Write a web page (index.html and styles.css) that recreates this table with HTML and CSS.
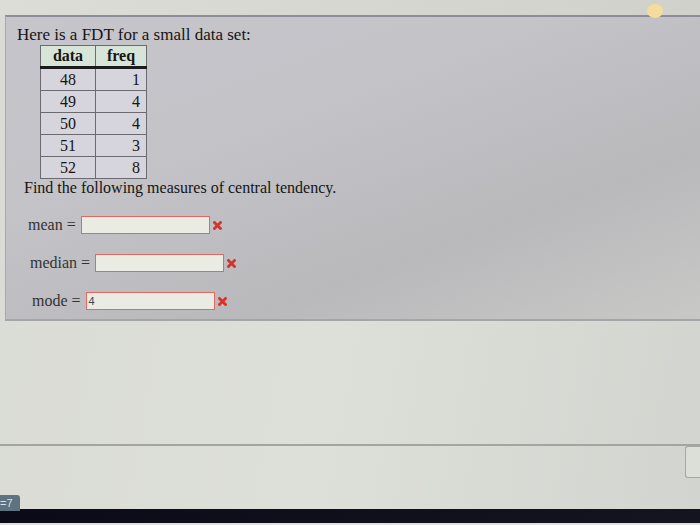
FILE: index.html
```html
<!DOCTYPE html>
<html>
<head>
<meta charset="utf-8">
<link rel="stylesheet" href="styles.css">
</head>
<body>
<div class="page">
  <div class="topbar"></div>
  <div class="glare"></div>
  <div class="panel">
    <p class="intro">Here is a FDT for a small data set:</p>
    <table class="fdt">
      <thead>
        <tr><th>data</th><th>freq</th></tr>
      </thead>
      <tbody>
        <tr><td>48</td><td>1</td></tr>
        <tr><td>49</td><td>4</td></tr>
        <tr><td>50</td><td>4</td></tr>
        <tr><td>51</td><td>3</td></tr>
        <tr><td>52</td><td>8</td></tr>
      </tbody>
    </table>
    <p class="find">Find the following measures of central tendency.</p>
    <div class="answers">
      <div class="row r1">
        <span class="lbl">mean =</span>
        <span class="box"></span>
        <svg class="mark" width="9" height="9" viewBox="0 0 9 9"><path d="M1.5 1.5L7.5 7.5M7.5 1.5L1.5 7.5" stroke="#d8322c" stroke-width="2.8" stroke-linecap="square"/></svg>
      </div>
      <div class="row r2">
        <span class="lbl">median =</span>
        <span class="box"></span>
        <svg class="mark" width="9" height="9" viewBox="0 0 9 9"><path d="M1.5 1.5L7.5 7.5M7.5 1.5L1.5 7.5" stroke="#d8322c" stroke-width="2.8" stroke-linecap="square"/></svg>
      </div>
      <div class="row r3">
        <span class="lbl">mode =</span>
        <span class="box">4</span>
        <svg class="mark" width="9" height="9" viewBox="0 0 9 9"><path d="M1.5 1.5L7.5 7.5M7.5 1.5L1.5 7.5" stroke="#d8322c" stroke-width="2.8" stroke-linecap="square"/></svg>
      </div>
    </div>
  </div>
  <div class="gap"></div>
  <div class="lower">
    <div class="tab">=7</div>
    <div class="sidebox"></div>
  </div>
  <div class="bezel"></div>
</div>
</body>
</html>
```
FILE: styles.css
```css
html, body {
  margin: 0;
  padding: 0;
  width: 700px;
  height: 525px;
  overflow: hidden;
}
body {
  background: #d8dad4;
  font-family: "Liberation Serif", "Times New Roman", serif;
  color: #151515;
}
.page {
  position: relative;
  width: 700px;
  height: 525px;
  display: flex;
  flex-direction: column;
  background: linear-gradient(100deg, #d9dbd4 0%, #dde0d8 50%, #d2d4cf 100%);
}
.topbar {
  height: 15px;
  background: linear-gradient(90deg, #dcddd6, #cfd1ca);
}
.glare {
  position: absolute;
  left: 647px;
  top: 4px;
  width: 16px;
  height: 14px;
  border-radius: 50%;
  background: #f6dc9c;
}
.panel {
  margin-left: 5px;
  height: 306px;
  border-top: 2px solid #8d8c99;
  border-left: 1px solid #a8a8ac;
  border-bottom: 2px solid #a4a5a6;
  background: linear-gradient(160deg, #c6c5cb 0%, #c4c3c8 35%, #b9b9bc 70%, #c8c8c6 100%);
  padding: 8px 0 0 11px;
  box-sizing: border-box;
}
.intro {
  margin: 0;
  font-size: 17px;
  line-height: 20px;
}
.fdt {
  margin-left: 23px;
  border-collapse: collapse;
  font-size: 16px;
}
.fdt th {
  background: #d7e4d8;
  font-weight: bold;
  font-size: 16px;
  height: 20px;
  padding: 0;
  border: 1px solid #6b6b70;
  border-bottom: 3px solid #1c1c1c;
}
.fdt th:first-child { width: 54px; }
.fdt th:last-child { width: 50px; }
.fdt td {
  background: #d6d4dc;
  border: 1px solid #6a6a70;
  height: 21px;
  padding: 0 4px;
  line-height: 20px;
}
.fdt td:first-child { text-align: center; }
.fdt td:last-child { text-align: right; padding-right: 6px; }
.find {
  margin: 0 0 0 7px;
  font-size: 16px;
  line-height: 18px;
}
.answers {
  display: flex;
  flex-direction: column;
  gap: 20px;
  margin-top: 19px;
}
.row {
  display: flex;
  align-items: center;
  font-size: 16px;
  color: #333;
}
.r1 { margin-left: 11px; }
.r2 { margin-left: 13px; }
.r3 { margin-left: 15px; }
.lbl { margin-right: 5px; }
.box {
  display: inline-block;
  width: 125px;
  height: 16px;
  border: 1px solid #de6a62;
  background: #eaece4;
  font-family: "Liberation Sans", Arial, sans-serif;
  font-size: 11px;
  line-height: 16px;
  padding-left: 2px;
  color: #444;
}
.mark { margin-left: 3px; }
.gap {
  height: 123px;
  border-bottom: 2px solid #a3a5a0;
}
.lower {
  flex: 1;
  display: flex;
  justify-content: space-between;
  align-items: flex-start;
  position: relative;
}
.tab {
  align-self: flex-end;
  width: 20px;
  height: 16px;
  background: #5d7380;
  color: #dde;
  font-family: "Liberation Sans", Arial, sans-serif;
  font-size: 11px;
  line-height: 16px;
  border-radius: 0 3px 0 0;
  margin-bottom: -2px;
}
.sidebox {
  margin-top: 0;
  width: 14px;
  height: 30px;
  border: 1px solid #a5a7a2;
  border-right: none;
  border-radius: 3px 0 0 3px;
  background: #dcdfd8;
}
.bezel {
  height: 14px;
  background: linear-gradient(90deg, #0b0a18, #141420);
  border-bottom: 2px solid #e0e0e0;
}
```
